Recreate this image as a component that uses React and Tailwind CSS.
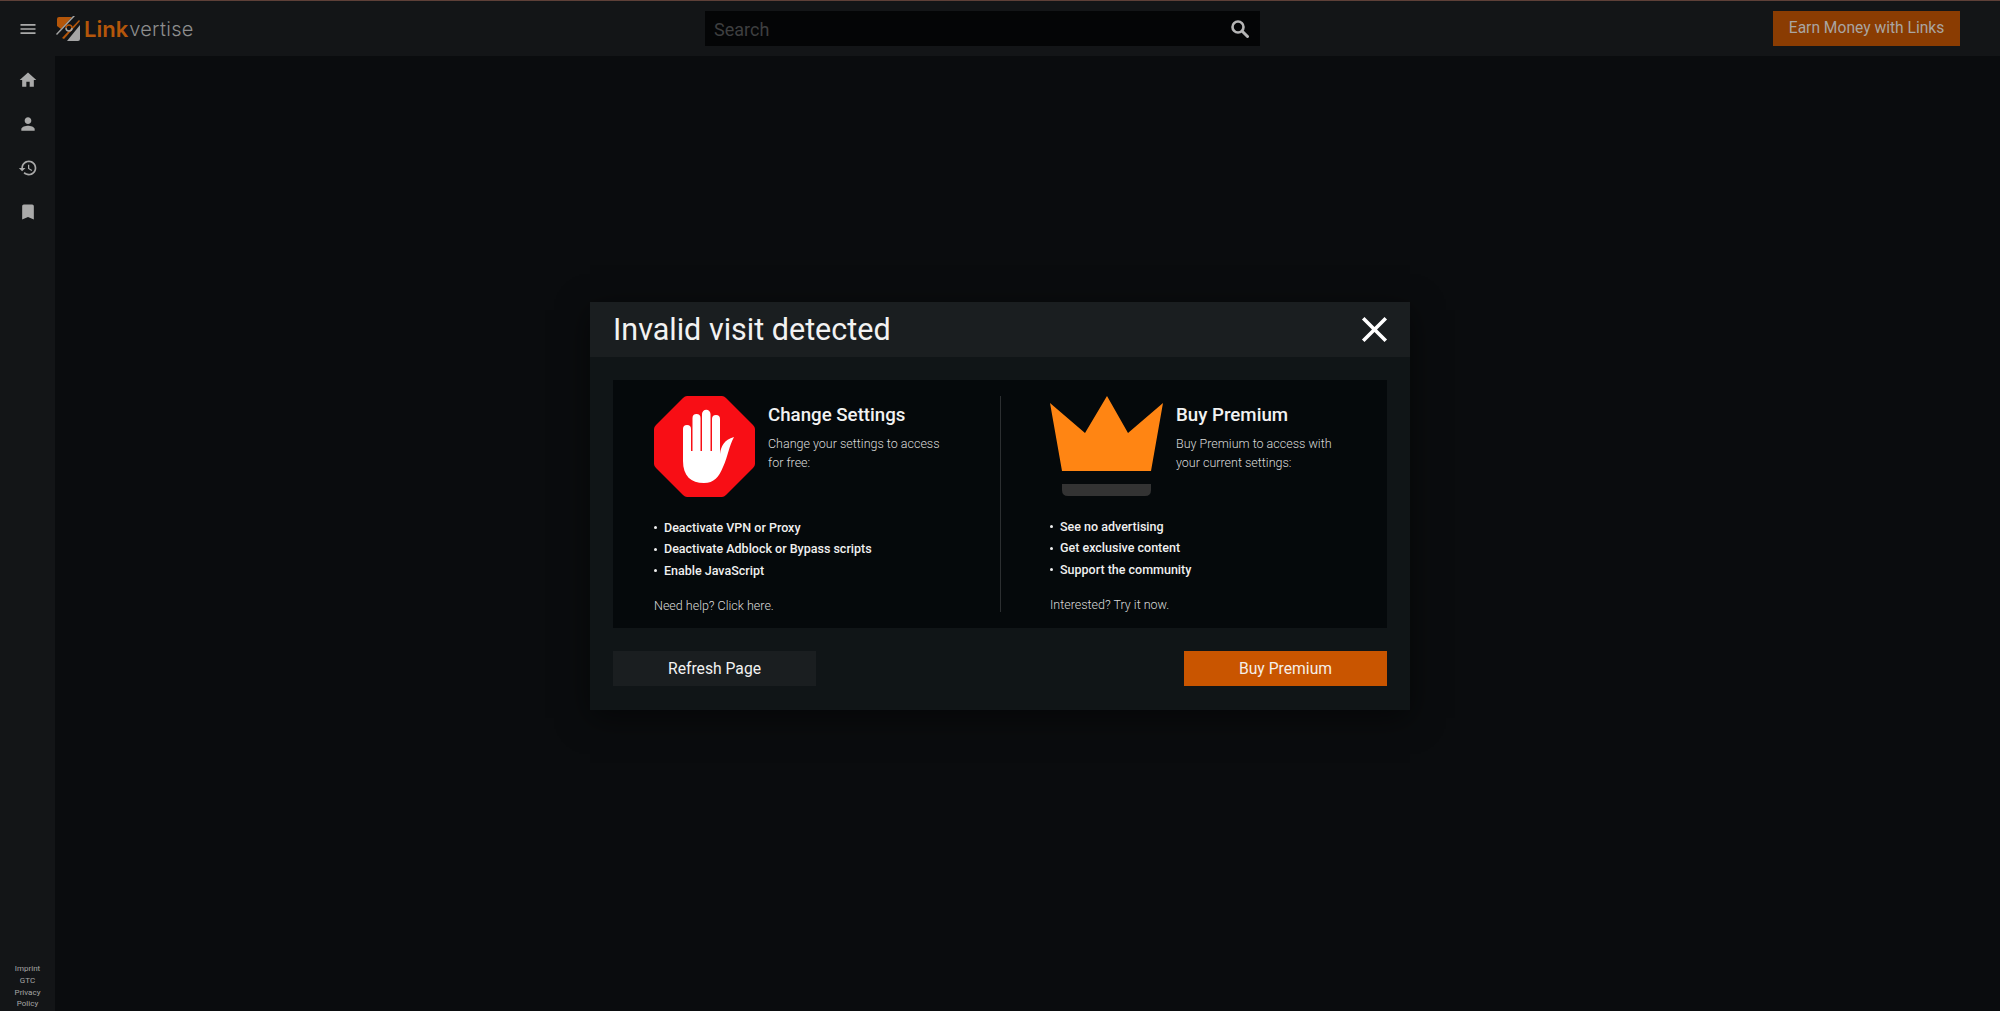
const Icon = ({ d, className }) => (
  <svg viewBox="0 0 24 24" fill="currentColor" className={className}>
    <path d={d} />
  </svg>
);

const icons = {
  menu: "M3 18h18v-2H3v2zm0-5h18v-2H3v2zm0-7v2h18V6H3z",
  close: "M19 6.41L17.59 5 12 10.59 6.41 5 5 6.41 10.59 12 5 17.59 6.41 19 12 13.41 17.59 19 19 17.59 13.41 12z",
  home: "M10 20v-6h4v6h5v-8h3L12 3 2 12h3v8z",
  person: "M12 12c2.21 0 4-1.79 4-4s-1.79-4-4-4-4 1.79-4 4 1.79 4 4 4zm0 2c-2.67 0-8 1.34-8 4v2h16v-2c0-2.66-5.33-4-8-4z",
  history: "M13 3c-4.97 0-9 4.03-9 9H1l3.89 3.89.07.14L9 12H6c0-3.87 3.13-7 7-7s7 3.13 7 7-3.13 7-7 7c-1.93 0-3.68-.79-4.94-2.06l-1.42 1.42C8.27 19.99 10.51 21 13 21c4.97 0 9-4.03 9-9s-4.03-9-9-9zm-1 5v5l4.28 2.54.72-1.21-3.5-2.08V8H12z",
  bookmark: "M17 3H7c-1.1 0-1.99.9-1.99 2L5 21l7-3 7 3V5c0-1.1-.9-2-2-2z",
};

const Logo = () => (
  <div className="flex items-center">
    <svg viewBox="0 0 25 26" className="w-[25px] h-[26px]">
      <path d="M1 10 V3 Q1 1 3 1 H16 L5 13 Z" fill="#b4560a" />
      <path d="M19 0 L1 19 L0 18 L17 0 Z" fill="#a5a5a5" />
      <path d="M24 5 L8 23 L6 22 L23 4 Z" fill="#b4560a" />
      <path d="M24 9 V23 Q24 25 22 25 H11 Z" fill="#a5a5a5" />
      <path d="M10 12 A3 3 0 0 1 16 12" fill="none" stroke="#b4560a" strokeWidth="1.5" />
      <path d="M16 12 A3 3 0 0 1 10 12" fill="none" stroke="#a5a5a5" strokeWidth="1.5" />
    </svg>
    <span className="ml-[3px] text-[22px] leading-none font-['Inter',sans-serif] font-semibold text-[#b4560a]">Link</span>
    <span className="ml-[1px] text-[20px] tracking-[0.3px] leading-none font-['Inter',sans-serif] font-light text-[#8d8d8d]">vertise</span>
  </div>
);

const Header = () => (
  <header className="h-[56px] shrink-0 bg-[#131517] border-t border-[#5e4038] flex items-center relative z-10">
    <div className="w-[56px] flex justify-center">
      <Icon d={icons.menu} className="w-[20px] h-[20px] text-[#aaaaaa]" />
    </div>
    <Logo />
    <div className="absolute left-[705px] top-[10px] w-[555px] h-[35px] bg-[#040506] flex items-center justify-between pl-[9px] pr-[11px]">
      <span className="text-[18px] text-[#3e3f40] pt-[2px]">Search</span>
      <svg viewBox="0 0 18 18" className="w-[18px] h-[18px] text-[#b5b5b5]">
        <circle cx="7" cy="7" r="5.5" fill="none" stroke="currentColor" strokeWidth="2.6" />
        <path d="M11.5 11.5 L16.5 16.5" stroke="currentColor" strokeWidth="3" strokeLinecap="round" />
      </svg>
    </div>
    <button className="absolute left-[1773px] top-[10px] w-[187px] h-[35px] bg-[#8a3c02] text-[#a9a5a1] text-[15.6px] flex items-center justify-center">
      Earn Money with Links
    </button>
  </header>
);

const Sidebar = () => (
  <aside className="w-[55px] shrink-0 bg-[#131517] flex flex-col items-center justify-between">
    <nav className="flex flex-col items-center gap-[24px] pt-[14px] text-[#aaaaaa]">
      <Icon d={icons.home} className="w-[20px] h-[20px]" />
      <Icon d={icons.person} className="w-[20px] h-[20px]" />
      <Icon d={icons.history} className="w-[20px] h-[20px]" />
      <Icon d={icons.bookmark} className="w-[20px] h-[20px]" />
    </nav>
    <div className="flex flex-col items-center text-[8px] leading-[11.7px] text-[#a5a5a5] pb-[1px]">
      <span>Imprint</span>
      <span>GTC</span>
      <span>Privacy</span>
      <span>Policy</span>
    </div>
  </aside>
);

const StopSign = () => (
  <svg viewBox="0 0 101 101" className="w-[101px] h-[101px] shrink-0">
    <path
      d="M33 0 H68 Q70 0 72 2 L99 29 Q101 31 101 33 V68 Q101 70 99 72 L72 99 Q70 101 68 101 H33 Q31 101 29 99 L2 72 Q0 70 0 68 V33 Q0 31 2 29 L29 2 Q31 0 33 0 Z"
      fill="#f80e15"
    />
    <path
      d="M29 33 a4 4 0 0 1 8 0 V55 h1.5 V22 a4 4 0 0 1 8 0 V55 h1.5 V18 a4 4 0 0 1 8.5 0 V55 h1.5 V23 a4 4 0 0 1 8 0 V58 C67 50 70 44 80 41 C75 50 74 60 69 71 C65 81 60 87 50 87 C37 87 29 80 29 65 Z"
      fill="#ffffff"
    />
  </svg>
);

const Crown = () => (
  <svg viewBox="0 0 113 100" className="w-[113px] h-[100px] shrink-0">
    <path d="M0 7 L35 37 L57 0 L78 37 L113 7 L101 75 H12 Z" fill="#ff8513" />
    <path d="M12 88 H101 V94 Q101 100 95 100 H18 Q12 100 12 94 Z" fill="#333333" />
  </svg>
);

const Option = ({ icon, title, text, items, foot, className }) => (
  <div className={`flex flex-col ${className}`}>
    <div className="flex h-[101px]">
      {icon}
      <div className="ml-[13px]">
        <h3 className="text-[18.7px] leading-[24px] font-medium text-[#f2f2f2] mt-[7px]">{title}</h3>
        <p className="mt-[7px] text-[12.5px] leading-[19px] font-light text-[#dadada] w-[175px]">{text}</p>
      </div>
    </div>
    <ul className="mt-[21px] flex flex-col gap-[1.5px]">
      {items.map((item) => (
        <li key={item} className="flex items-center text-[12.5px] leading-[20px] font-medium text-[#f0f0f0]">
          <span className="w-[3px] h-[3px] rounded-full bg-[#f0f0f0] mr-[7px]" />
          {item}
        </li>
      ))}
    </ul>
    <p className="mt-[15px] text-[12.5px] leading-[20px] font-light text-[#dadada]">{foot}</p>
  </div>
);

const Modal = () => (
  <div className="absolute inset-0 flex items-center justify-center">
    <div className="w-[820px] h-[408px] bg-[#101517] shadow-[0_8px_30px_rgba(0,0,0,0.5)]">
      <div className="h-[55px] bg-[#1a1e20] flex items-center justify-between pl-[23px] pr-[14px]">
        <h2 className="text-[30.5px] text-[#f2f2f2] pt-[2px]">Invalid visit detected</h2>
        <Icon d={icons.close} className="w-[43px] h-[43px] text-white" />
      </div>
      <div className="mt-[23px] mx-[23px] h-[248px] bg-[#05090b] flex items-stretch py-[16px]">
        <Option
          className="w-[387px] pl-[41px]"
          icon={<StopSign />}
          title="Change Settings"
          text="Change your settings to access for free:"
          items={["Deactivate VPN or Proxy", "Deactivate Adblock or Bypass scripts", "Enable JavaScript"]}
          foot="Need help? Click here."
        />
        <div className="w-px bg-[#2c2f31]" />
        <Option
          className="flex-1 pl-[49px]"
          icon={<Crown />}
          title="Buy Premium"
          text="Buy Premium to access with your current settings:"
          items={["See no advertising", "Get exclusive content", "Support the community"]}
          foot="Interested? Try it now."
        />
      </div>
      <div className="mt-[23px] mx-[23px] flex justify-between">
        <button className="w-[203px] h-[35px] bg-[#1a1e20] text-[#f2f2f2] text-[15.7px] pt-[1px]">Refresh Page</button>
        <button className="w-[203px] h-[35px] bg-[#c95500] text-[#f5efe9] text-[15.7px] pt-[1px]">Buy Premium</button>
      </div>
    </div>
  </div>
);

export default function App() {
  return (
    <div className="h-[1011px] flex flex-col relative overflow-hidden bg-[#0a0c0e] font-['Roboto',sans-serif]">
      <Header />
      <div className="flex-1 flex">
        <Sidebar />
      </div>
      <Modal />
    </div>
  );
}
